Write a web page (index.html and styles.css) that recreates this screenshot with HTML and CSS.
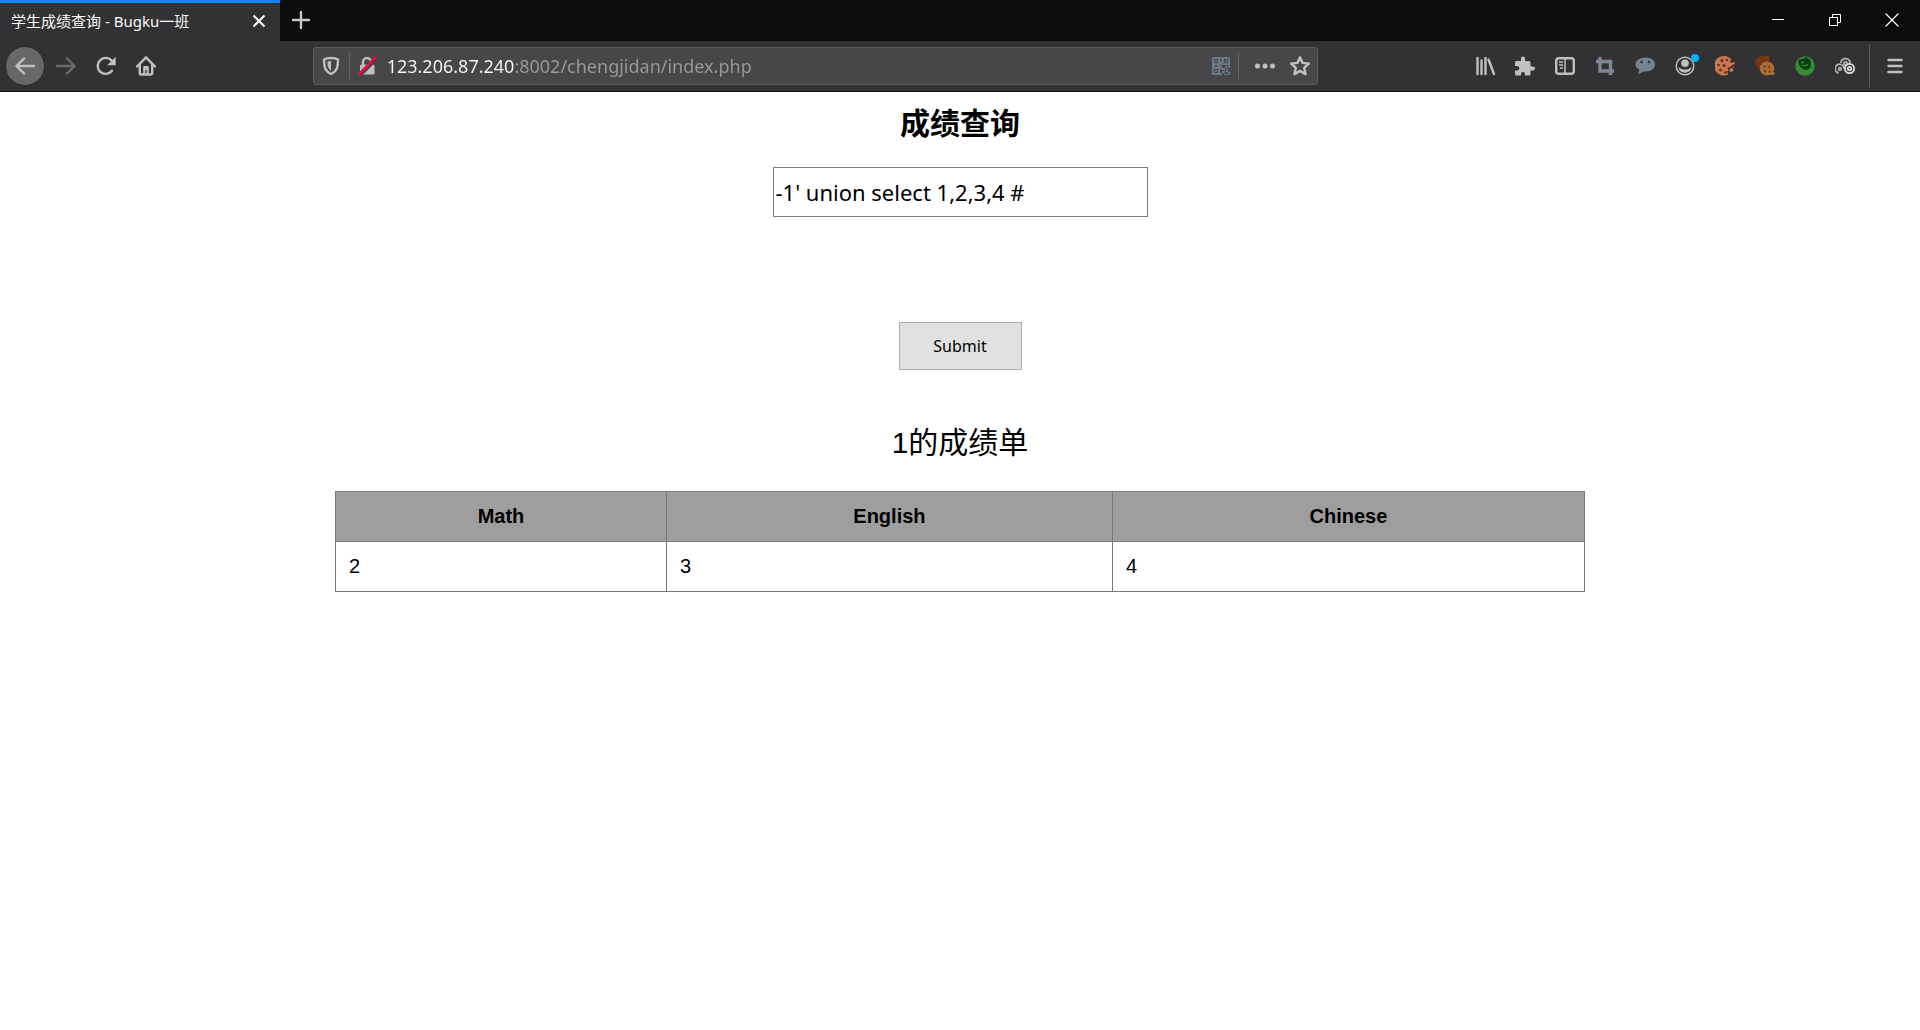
FILE: index.html
```html
<!DOCTYPE html>
<html lang="zh-CN">
<head>
  <meta charset="UTF-8">
  <meta name="viewport" content="width=device-width, initial-scale=1.0">
  <title>学生成绩查询 - Bugku一班</title>
  <link rel="stylesheet" href="styles.css">
</head>
<body>

<header class="browser">
  <div class="tabbar">
    <div class="tab">
      <span class="tab-title">学生成绩查询 - Bugku一班</span>
      <button class="tab-close" aria-label="关闭标签页">
        <svg width="20" height="20" viewBox="0 0 20 20"><path d="M4.5 4.5l11 11M15.5 4.5l-11 11" stroke="#f9f9fa" stroke-width="2" fill="none"/></svg>
      </button>
    </div>
    <button class="tab-new" aria-label="新标签页">
      <svg width="20" height="20" viewBox="0 0 20 20"><path d="M10 2v16M2 10h16" stroke="#c8c8c9" stroke-width="2.4" stroke-linecap="round"/></svg>
    </button>
    <div class="window-buttons">
      <button aria-label="最小化"><svg width="14" height="14" viewBox="0 0 14 14"><path d="M1 6.5h12" stroke="#fff"/></svg></button>
      <button aria-label="还原"><svg width="14" height="14" viewBox="0 0 14 14"><path d="M1.5 4.5h8v8h-8zM4.5 4v-2.5h8v8h-3" stroke="#fff" fill="none"/></svg></button>
      <button aria-label="关闭"><svg width="14" height="14" viewBox="0 0 14 14"><path d="M.5.5l13 13M13.5.5l-13 13" stroke="#fff" stroke-width="1.2"/></svg></button>
    </div>
  </div>

  <nav class="toolbar">
    <div class="nav-buttons">
      <button class="back" aria-label="后退">
        <svg width="20" height="20" viewBox="0 0 20 20"><path d="M19 10H2M9 2.5L1.5 10 9 17.5" class="line thick"/></svg>
      </button>
      <button class="forward" aria-label="前进" disabled>
        <svg width="20" height="20" viewBox="0 0 20 20"><path d="M1 10h17M11 2.5l7.5 7.5-7.5 7.5" class="line thick"/></svg>
      </button>
      <button aria-label="刷新">
        <svg width="20" height="20" viewBox="0 0 20 20"><path d="M16 14.8A8 8 0 1 1 16 5" class="line thick"/><path d="M19.6.8v8.4h-8.4z" class="solid"/></svg>
      </button>
      <button aria-label="主页">
        <svg width="20" height="20" viewBox="0 0 20 20"><path d="M1 10.5L10 1.3l9 9.2" class="line thick"/><path d="M3.8 9v8q0 1.500 1.500 1.500h9.400q1.500 0 1.500-1.500V9" class="line thick"/><path d="M7.200 18v-7q0-1 1-1h3.600q1 0 1 1v7h-2.100v-4h-1.400v4z" class="solid"/></svg>
      </button>
    </div>

    <div class="spacer"></div>

    <form class="urlbar">
      <svg class="shield" width="18" height="20" viewBox="0 0 18 20"><path d="M9 2C6.500 2 3.500 2.600 2 3.500 2 10 2.500 15 9 18c6.500-3 7-8 7-14.500C14.500 2.600 11.500 2 9 2z" class="line thick"/><path d="M9 5c-1.500 0-2.500.2-3.500.6C5.300 10 6 12.800 9 14.700z" class="solid"/></svg>
      <span class="divider"></span>
      <svg class="lock" width="20" height="20" viewBox="0 0 20 20"><path d="M6 9V6a4 4 0 0 1 8 0v3" class="line thick"/><rect x="3" y="8.500" width="14.500" height="10" rx="1.500" class="solid"/><path d="M2.500 20.500L19 4" stroke="#474749" stroke-width="2.500"/><path d="M2 18L18 1.500" stroke="#ff0039" stroke-width="2.500" stroke-linecap="round"/></svg>
      <input class="url" type="text" aria-label="网址" value="123.206.87.240:8002/chengjidan/index.php">
      <svg class="qr" width="20" height="20" viewBox="0 0 20 20"><path d="M2 2h6v6H2zM12 2h6v6h-6zM2 12h6v6H2z" fill="none" stroke="#6c7883" stroke-width="2"/><path d="M4 4h2v2H4zM14 4h2v2h-2zM4 14h2v2H4zM9 1h2v2H9zM9 5h2v4H9zM1 9h3v2H1zM6 9h3v2H6zM9 10h2v3H9zM11 12h3v2h-3zM14 10h2v2h-2zM17 9h2v3h-2zM15 13h2v3h-2zM11 15h3v2h-3zM9 17h2v2H9zM13 18h3v1h-3zM17 16h2v3h-2z" fill="#6c7883"/></svg>
      <span class="divider"></span>
      <button type="button" aria-label="页面操作"><svg width="20" height="20" viewBox="0 0 20 20"><g class="solid"><circle cx="2.500" cy="10" r="2.500"/><circle cx="10" cy="10" r="2.500"/><circle cx="17.500" cy="10" r="2.500"/></g></svg></button>
      <button type="button" aria-label="添加书签"><svg width="20" height="20" viewBox="0 0 20 20"><path d="M10 1.300l2.600 5.600 6.200.7-4.600 4.200 1.300 6.300-5.500-3.200-5.500 3.200 1.300-6.300L1.200 7.600l6.200-.7z" class="line thick"/></svg></button>
    </form>

    <div class="spacer"></div>

    <div class="extensions">
      <button aria-label="我的足迹"><svg width="20" height="20" viewBox="0 0 20 20"><path d="M2.500 2v16M6.500 4.500V18M10.500 2v16M13.500 3.500L19 18" class="line thick"/></svg></button>
      <button aria-label="附加组件"><svg width="20" height="20" viewBox="0 0 20 20"><path d="M0 6.500Q0 5 1.500 5H6V2.500a2 2 0 1 1 4 0V5h4q1.500 0 1.500 1.500V10.500H18a2 2 0 1 1 0 4h-2.500V18q0 1.500-1.500 1.500h-4V18a2 2 0 1 0-4 0v1.500H1.500Q0 19.500 0 18v-3.500h2a2 2 0 1 0 0-4.500H0z" class="solid"/></svg></button>
      <button aria-label="侧栏"><svg width="20" height="20" viewBox="0 0 20 20"><rect x="1.200" y="2.200" width="17.600" height="15.600" rx="2.500" class="line thick"/><path d="M10 2v16M4 6h4M4 9h4M5 12h3" stroke="#c0c0c1" stroke-width="1.500"/></svg></button>
      <button aria-label="截图"><svg width="20" height="20" viewBox="0 0 20 20"><path d="M5 1v14h14M1 5.500h14.500V19" stroke="#7d8894" stroke-width="3.400" fill="none"/></svg></button>
      <button aria-label="聊天"><svg width="20" height="20" viewBox="0 0 20 20"><path d="M10.500 1.500C16 1.500 20 4.500 20 8.500s-4 7-9.500 7h-2L3 18.500l1.500-4.500C2 12.500.5 10.900.5 8.500.5 4.500 5 1.500 10.500 1.500z" fill="#768390"/><circle cx="6.500" cy="6" r="1.300" fill="#323234"/><circle cx="14" cy="6" r="1.300" fill="#323234"/></svg></button>
      <button class="account" aria-label="账户"><svg width="20" height="20" viewBox="0 0 20 20"><circle cx="10" cy="10" r="8.800" class="line slim"/><circle cx="10" cy="7.300" r="3.800" class="solid"/><path d="M3.500 11.500q1.500 0 2.500 1.200 4 1.800 8 0 1-1.200 2.500-1.200-1 5-6.500 5.200-5.500-.2-6.500-5.200z" class="solid"/></svg><span class="dot"></span></button>
      <button aria-label="Cookie 编辑器"><svg width="20" height="20" viewBox="0 0 20 20"><path d="M11.500.3a9.800 9.800 0 1 0 1.800 18.200l-1.300-3 1.500-1-1-3 3-.5 1-1.500 3.500-1.500-1-2-3.500 1-.5-2 1.500-2z" fill="#c97750"/><circle cx="16.300" cy="14" r="1.900" fill="#c97750"/><circle cx="18.500" cy="11" r=".9" fill="#8c4a35"/><g fill="#6b2c24"><circle cx="7" cy="4.500" r="1.500"/><circle cx="12" cy="4" r="1.200"/><circle cx="3.500" cy="9" r="1.300"/><circle cx="9" cy="9.500" r="1.500"/><circle cx="5.500" cy="14" r="1.500"/><circle cx="10.500" cy="16.500" r="1.300"/></g></svg></button>
      <button aria-label="Cookie 管理"><svg width="20" height="20" viewBox="0 0 20 20"><ellipse cx="6.500" cy="6.500" rx="6.500" ry="6.500" fill="#743611"/><path d="M7 0h7v6l-6-1z" fill="#743611"/><ellipse cx="12" cy="12.500" rx="7.300" ry="7" fill="#aa6c35"/><path d="M14 16h5.500v3H14z" fill="#aa6c35"/><g fill="#5b2c10"><circle cx="9.500" cy="10.500" r="1"/><circle cx="14" cy="11" r=".9"/><circle cx="10" cy="15" r=".9"/><circle cx="14.500" cy="15.500" r=".9"/></g></svg></button>
      <button aria-label="代理"><svg width="20" height="20" viewBox="0 0 20 20"><circle cx="10" cy="10" r="9.800" fill="#348c37"/><path d="M3 5Q6 2 9 3l1-2q5 1 6 6l-1 5q-3 3-7 1-4-2-5-8z" fill="#0d3b13"/><path d="M6 6q2 1 3 0M7 9q3 2 6-1" stroke="#348c37" stroke-width="1.500" fill="none"/></svg></button>
      <button aria-label="代理切换"><svg width="20" height="20" viewBox="0 0 20 20"><g fill="none" stroke="#a9a9aa" stroke-width="2"><path d="M3.500 17A4.400 4.400 0 1 1 9 13"/><circle cx="5" cy="13" r="1.200"/><path d="M6 7a4.500 4.500 0 0 1 9 0"/><circle cx="10.500" cy="7.500" r="1.500"/></g><g fill="none" stroke="#e0e0e0" stroke-width="1.800"><circle cx="14.500" cy="12.500" r="4.600"/><circle cx="14.500" cy="12.500" r="1.700"/></g></svg></button>
    </div>
    <button class="menu" aria-label="打开菜单"><svg width="20" height="20" viewBox="0 0 20 20"><path d="M3.500 4h13M3.500 10h13M3.500 16h13" class="line thick"/></svg></button>
  </nav>
</header>

<main class="content">
  <form class="query">
    <h1><label for="id">成绩查询</label></h1>
    <input id="id" class="query-input" type="text" name="id" value="-1' union select 1,2,3,4 #">
    <button class="submit" type="button">Submit</button>
  </form>

  <table class="score">
    <caption>1的成绩单</caption>
    <colgroup>
      <col class="col-math">
      <col class="col-english">
      <col class="col-chinese">
    </colgroup>
    <tr>
      <th>Math</th>
      <th>English</th>
      <th>Chinese</th>
    </tr>
    <tr>
      <td>2</td>
      <td>3</td>
      <td>4</td>
    </tr>
  </table>
</main>

</body>
</html>
```
FILE: styles.css
```css
body {
  margin: 0;
  background-color: #fff;
  color: #000;
  font-family: "Liberation Sans", "Noto Sans CJK SC", sans-serif;
}
button {
  display: flex;
  align-items: center;
  justify-content: center;
  padding: 0;
  border: none;
  background: none;
}
svg {
  display: block;
  flex: none;
}
.line {
  fill: none;
  stroke: #c0c0c1;
  stroke-width: 2;
  stroke-linecap: round;
  stroke-linejoin: round;
}
.thick {
  stroke-width: 2.4;
}
.slim {
  stroke-width: 1.5;
}
.solid {
  fill: #c0c0c1;
}

/* tab bar */
.browser {
  font-family: "Noto Sans", "Noto Sans CJK SC", sans-serif;
}
.tabbar {
  display: flex;
  height: 41px;
  background-color: #0c0c0c;
}
.tab {
  display: flex;
  align-items: center;
  justify-content: space-between;
  box-sizing: border-box;
  width: 280px;
  padding: 0 11px 3px;
  border-top: 3px solid #0a84ff;
  background-color: #323234;
}
.tab-title {
  color: #f9f9fa;
  font-size: 15px;
  line-height: 20px;
}
.tab-new {
  width: 42px;
  height: 40px;
}
.window-buttons {
  display: flex;
  height: 40px;
  margin-left: auto;
}
.window-buttons button {
  width: 57px;
}

/* toolbar */
.toolbar {
  display: flex;
  align-items: center;
  height: 50px;
  border-bottom: 1px solid #0c0c0c;
  background-color: #323234;
}
.nav-buttons,
.extensions {
  display: flex;
}
.nav-buttons {
  padding-left: 5px;
}
.nav-buttons button,
.extensions button {
  position: relative;
  width: 40px;
  height: 40px;
}
.nav-buttons .back {
  box-sizing: border-box;
  margin-right: 1px;
  border: 1px solid #28282a;
  border-radius: 50%;
  background-color: #676768;
}
.nav-buttons .forward {
  opacity: 0.4;
}
.spacer {
  flex: 147;
}
.urlbar {
  display: flex;
  align-items: center;
  flex: 1006;
  box-sizing: border-box;
  height: 38px;
  border: 1px solid #5c5c5e;
  border-radius: 3px;
  background-color: #474749;
}
.shield {
  margin: 0 9px 0 8px;
}
.divider {
  width: 1px;
  height: 26px;
  background-color: #656567;
}
.lock {
  margin: 0 10px 0 7px;
}
.url {
  flex: 1;
  min-width: 0;
  padding: 0;
  border: none;
  /* host in white, the rest of the address in grey */
  background: linear-gradient(to right, #f9f9fa 128px, #9a9a9b 128px);
  -webkit-background-clip: text;
  background-clip: text;
  color: transparent;
  font-family: inherit;
  font-size: 18px;
  line-height: 26px;
}
.qr {
  margin: 0 7px;
}
.urlbar button {
  width: 35px;
  height: 36px;
}
.urlbar .divider + button {
  margin-left: 8px;
}
.dot {
  position: absolute;
  top: 8px;
  right: 6px;
  width: 8px;
  height: 8px;
  border-radius: 50%;
  background-color: #00b3f4;
}
.menu {
  width: 51px;
  height: 42px;
  margin-left: 4px;
  border-left: 1px solid #5c5c5e;
}

/* page */
.content {
  padding: 9px 8px;
}
.query {
  display: flex;
  flex-direction: column;
  align-items: center;
}
h1 {
  margin: 0 0 21px;
  font-size: 30px;
  line-height: 45px;
}
.query-input {
  box-sizing: border-box;
  width: 375px;
  height: 50px;
  padding: 1px 2px;
  border: 1px solid #7a7a7a;
  font-family: "Noto Sans", sans-serif;
  font-size: 22px;
}
.submit {
  width: 123px;
  height: 48px;
  margin-top: 105px;
  border: 1px solid #adadad;
  background-color: #e1e1e1;
  color: #000;
  font-family: "Noto Sans", sans-serif;
  font-size: 16px;
}
.score {
  width: 1250px;
  max-width: 100%;
  margin: 50px auto 0;
  border-collapse: collapse;
  table-layout: fixed;
  font-size: 20px;
  line-height: 23px;
}
.score caption {
  padding-bottom: 26px;
  font-size: 30px;
  line-height: 45px;
}
.col-math {
  width: 26.5%;
}
.col-english {
  width: 35.7%;
}
.score th,
.score td {
  padding: 13px;
  border: 1px solid #777;
  text-align: left;
}
.score th {
  background-color: #9e9e9e;
  text-align: center;
}
```
